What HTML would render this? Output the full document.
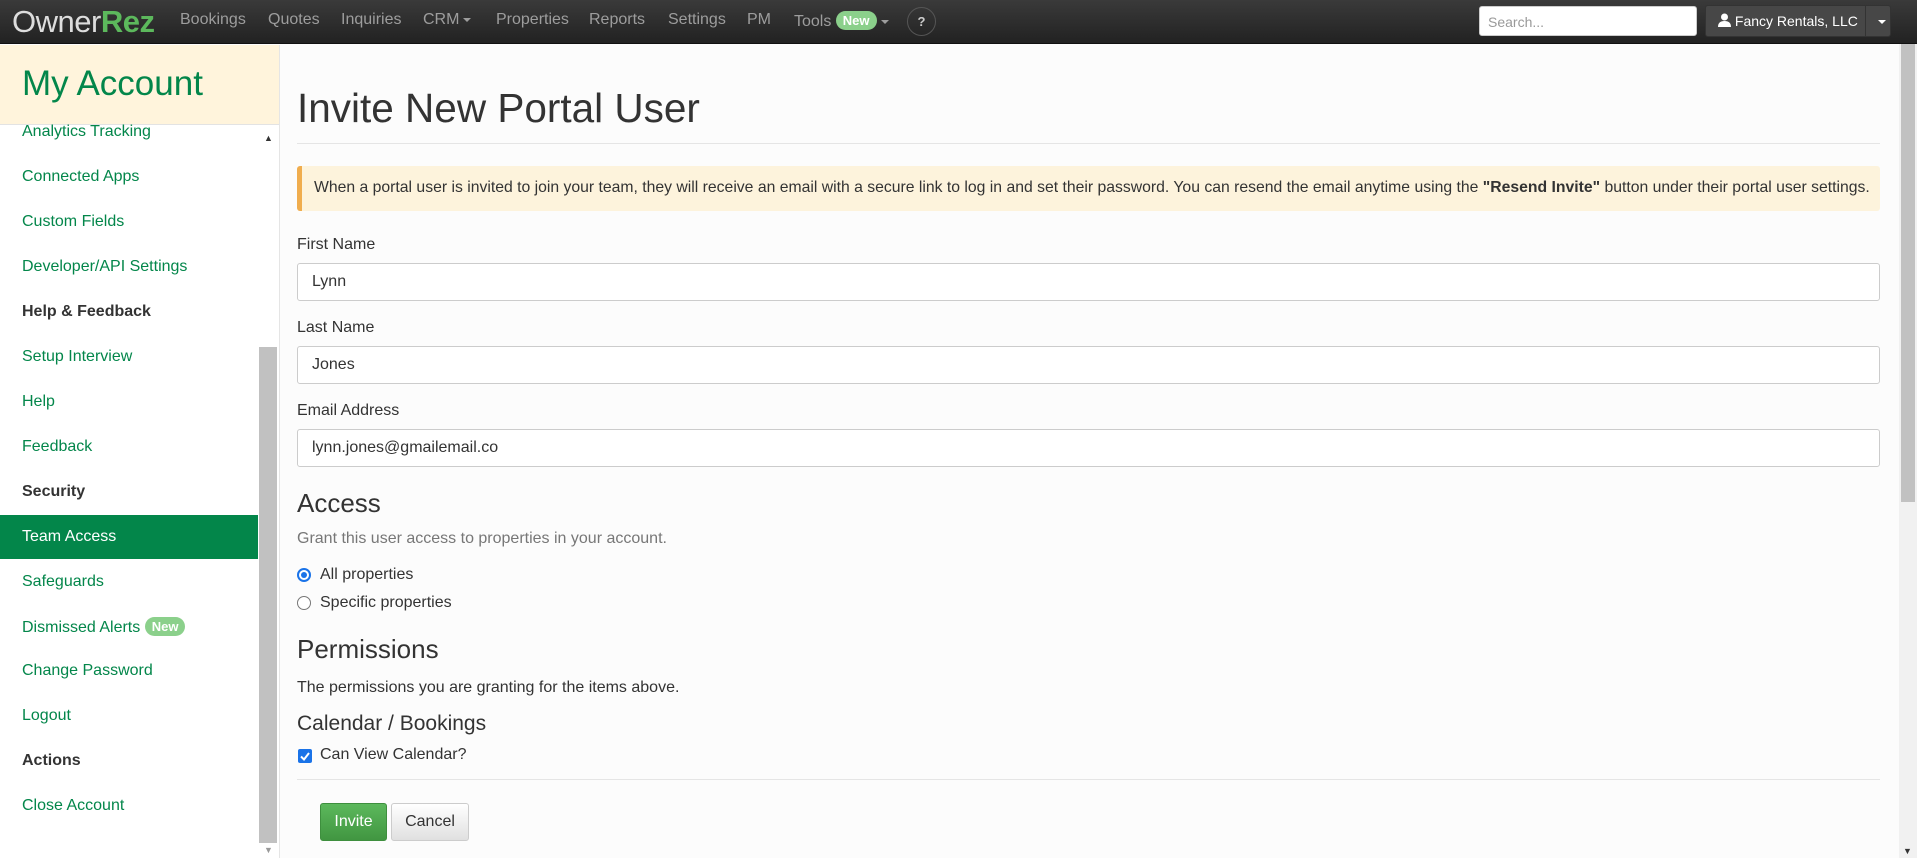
<!DOCTYPE html>
<html><head><meta charset="utf-8"><style>
*{box-sizing:border-box;margin:0;padding:0}
body{width:1917px;height:858px;overflow:hidden;background:#fcfcfc;font-family:"Liberation Sans",sans-serif;position:relative;color:#333}
.nav{position:absolute;left:0;top:0;width:1917px;height:44px;background:linear-gradient(#3a3a3a,#222);border-bottom:1px solid #111}
.logo{position:absolute;left:12px;top:4px;font-size:31px;color:#ddd;letter-spacing:-0.5px}
.logo b{color:#5cb85c}
.nl{position:absolute;top:11px;font-size:16px;color:#9d9d9d}
.caret{display:inline-block;width:0;height:0;border-left:4px solid transparent;border-right:4px solid transparent;border-top:4px solid #9d9d9d;vertical-align:middle;margin-left:4px}
.badge{display:inline-block;background:#8bd08b;color:#fff;font-weight:bold;font-size:13px;border-radius:10px;padding:2px 7px;vertical-align:1px}
.q{position:absolute;left:907px;top:7px;width:29px;height:29px;border:1px solid #555;border-radius:50%;color:#ccc;font-weight:bold;font-size:13px;text-align:center;line-height:27px}
.search{position:absolute;left:1479px;top:6px;width:218px;height:30px;background:#fff;border-radius:3px;border:1px solid #ccc;font-size:14px;color:#999;padding:7px 8px}
.user{position:absolute;left:1705px;top:5px;width:186px;height:32px;background:#474747;border:1px solid #333;border-radius:3px;color:#fff;font-size:14px;padding:7px 0 0 12px}
.user .sp{position:absolute;left:159px;top:0;width:1px;height:30px;background:#333}
.side{position:absolute;left:0;top:45px;width:280px;height:813px;background:#fff;border-right:1px solid #e5e5e5}
.sh{height:80px;background:#fff4dc;border-bottom:1px solid #e3e3e3;color:#03864a;font-size:35px;padding:19px 0 0 22px}
.si{position:absolute;left:22px;font-size:16px;color:#03864a}
.sb{font-weight:bold;color:#333}
.ta{position:absolute;left:0;top:470px;width:258px;height:44px;background:#03864a}
.sbar{position:absolute;left:259px;top:302px;width:18px;height:496px;background:#c1c1c1}
h1{position:absolute;left:297px;top:85px;font-size:40.5px;font-weight:normal;color:#333}
.hr{position:absolute;left:297px;width:1583px;height:1px;background:#e5e5e5}
.alert{position:absolute;left:297px;top:166px;width:1583px;height:45px;background:#fdf3dc;border-left:5px solid #f0ad4e;border-radius:3px;font-size:15.75px;padding:13px 0 0 12px;white-space:nowrap}
.lbl{position:absolute;left:297px;font-size:16px}
.inp{position:absolute;left:297px;width:1583px;height:38px;border:1px solid #ccc;border-radius:3px;background:#fff;font-size:16px;padding:9px 14px}
.h2{position:absolute;left:297px;font-size:26px}
.t{position:absolute;left:297px;font-size:16px}
.radio{position:absolute;left:297px;width:14px;height:14px;border:1px solid #777;border-radius:50%;background:#fff}
.radio.on{border:2px solid #1a73e8}
.radio.on:after{content:"";position:absolute;left:2px;top:2px;width:6px;height:6px;border-radius:50%;background:#1a73e8}
.btn{position:absolute;top:803px;height:38px;border-radius:3px;font-size:16px;text-align:center;line-height:36px}
.sc{position:absolute;left:1899px;top:44px;width:18px;height:814px;background:#f1f1f1}
</style></head><body>
<div class="nav">
<div class="logo">Owner<b>Rez</b></div>
<span class="nl" style="left:180px">Bookings</span>
<span class="nl" style="left:268px">Quotes</span>
<span class="nl" style="left:341px">Inquiries</span>
<span class="nl" style="left:423px">CRM<span class="caret"></span></span>
<span class="nl" style="left:496px">Properties</span>
<span class="nl" style="left:589px">Reports</span>
<span class="nl" style="left:668px">Settings</span>
<span class="nl" style="left:747px">PM</span>
<span class="nl" style="left:794px">Tools <span class="badge">New</span><span class="caret"></span></span>
<div class="q">?</div>
<div class="search">Search...</div>
<div class="user"><svg width="13" height="14" viewBox="0 0 13 14" style="vertical-align:-1px"><circle cx="6.5" cy="4" r="3.5" fill="#fff"/><path d="M0 14 Q0 8 6.5 8 Q13 8 13 14Z" fill="#fff"/></svg> Fancy Rentals, LLC<span class="sp"></span><span class="caret" style="position:absolute;left:168px;top:14px;border-top-color:#fff"></span></div>
</div>
<div class="side">
<div class="sh">My Account</div>
<div class="ta"></div>
<div class="sbar"></div>
<span style="position:absolute;left:264px;top:88px;font-size:9px;color:#333">▲</span>
<span style="position:absolute;left:264px;top:800px;font-size:9px;color:#999">▼</span>
<span class="si" style="top:78px">Analytics Tracking</span>
<span class="si" style="top:123px">Connected Apps</span>
<span class="si" style="top:168px">Custom Fields</span>
<span class="si" style="top:213px">Developer/API Settings</span>
<span class="si sb" style="top:258px">Help &amp; Feedback</span>
<span class="si" style="top:303px">Setup Interview</span>
<span class="si" style="top:348px">Help</span>
<span class="si" style="top:393px">Feedback</span>
<span class="si sb" style="top:438px">Security</span>
<span class="si" style="top:483px;color:#fff">Team Access</span>
<span class="si" style="top:528px">Safeguards</span>
<span class="si" style="top:572px">Dismissed Alerts <span class="badge">New</span></span>
<span class="si" style="top:617px">Change Password</span>
<span class="si" style="top:662px">Logout</span>
<span class="si sb" style="top:707px">Actions</span>
<span class="si" style="top:752px">Close Account</span>
</div>
<h1>Invite New Portal User</h1>
<div class="hr" style="top:143px"></div>
<div class="alert">When a portal user is invited to join your team, they will receive an email with a secure link to log in and set their password. You can resend the email anytime using the <b>"Resend Invite"</b> button under their portal user settings.</div>
<span class="lbl" style="top:236px">First Name</span>
<div class="inp" style="top:263px">Lynn</div>
<span class="lbl" style="top:319px">Last Name</span>
<div class="inp" style="top:346px">Jones</div>
<span class="lbl" style="top:402px">Email Address</span>
<div class="inp" style="top:429px">lynn.jones@gmailemail.co</div>
<span class="h2" style="top:488px">Access</span>
<span class="t" style="top:530px;color:#777">Grant this user access to properties in your account.</span>
<div class="radio on" style="top:568px"></div><span class="t" style="left:320px;top:566px">All properties</span>
<div class="radio" style="top:596px"></div><span class="t" style="left:320px;top:594px">Specific properties</span>
<span class="h2" style="top:634px">Permissions</span>
<span class="t" style="top:679px">The permissions you are granting for the items above.</span>
<span class="t" style="top:712px;font-size:21px">Calendar / Bookings</span>
<svg style="position:absolute;left:298px;top:749px" width="14" height="14"><rect width="14" height="14" rx="2" fill="#1a73e8"/><path d="M3 7.5 L6 10.5 L11 4" stroke="#fff" stroke-width="2" fill="none"/></svg>
<span class="t" style="left:320px;top:746px">Can View Calendar?</span>
<div class="hr" style="top:779px"></div>
<div class="btn" style="left:320px;width:67px;background:linear-gradient(#5cb85c,#419641);border:1px solid #3e8f3e;color:#fff">Invite</div>
<div class="btn" style="left:391px;width:78px;background:linear-gradient(#fff,#e0e0e0);border:1px solid #ccc;color:#333">Cancel</div>
<div class="sc"><div style="position:absolute;left:2px;top:0;width:14px;height:458px;background:#c1c1c1"></div><span style="position:absolute;left:4px;bottom:2px;font-size:9px;color:#333">▼</span></div>
</body></html>
